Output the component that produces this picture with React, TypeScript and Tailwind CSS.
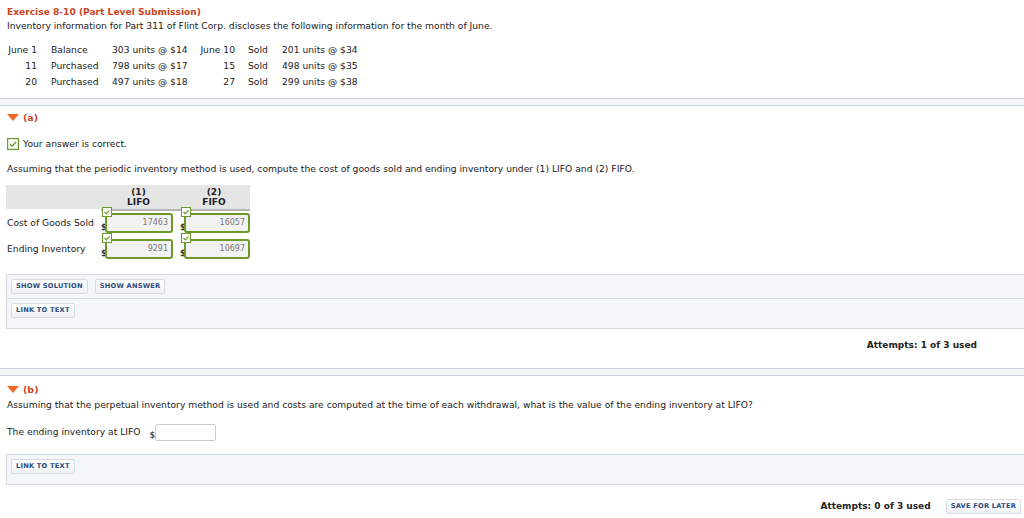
import React from "react";

const font = { fontFamily: '"DejaVu Sans", Verdana, sans-serif' };

function Tri() {
  return (
    <svg width="12" height="8" viewBox="0 0 12 8" className="mr-[4px]">
      <polygon points="0,0 12,0 6,7" fill="#f26522" />
    </svg>
  );
}

function SmallCheck({ size = 10 }: { size?: number }) {
  return (
    <svg width={size} height={size} viewBox="0 0 10 10">
      <rect x="0.5" y="0.5" width="9" height="9" fill="#fff" stroke="#6b9a2a" />
      <polyline points="2.5,5 4.3,6.8 7.5,3.3" fill="none" stroke="#6b9a2a" strokeWidth="1.2" />
    </svg>
  );
}

function Btn({ children }: { children: React.ReactNode }) {
  return (
    <div className="h-[15px] px-[4px] flex items-center rounded-[2px] border border-[#d6dce4] bg-gradient-to-b from-white to-[#eef1f5] text-[6.7px] font-bold text-[#2c4a7c] tracking-[0.2px] whitespace-nowrap">
      {children}
    </div>
  );
}

function Band() {
  return <div className="h-[8px] border-t border-b border-[#c9d1dc] bg-[#f3f7fa]" />;
}

function AnsInput({ value, w }: { value: string; w: number }) {
  return (
    <div className="relative flex items-end" style={{ width: w }}>
      <span className="w-[4px] text-[8px] font-bold text-[#333] leading-none mb-[1px]">$</span>
      <div className="flex-1 h-[20px] rounded-[3px] border-2 border-[#6b9a2a] bg-[#f2f2f2] flex items-center justify-end pr-[3px] text-[8px] text-[#777]">
        {value}
      </div>
      <div className="absolute left-[1px] -top-[6px]">
        <SmallCheck size={10} />
      </div>
    </div>
  );
}

export default function App() {
  return (
    <div style={font} className="w-[1024px] h-[518px] bg-white text-[#222] text-[9.2px] overflow-hidden">
      <div className="px-[7px] pt-[5px]">
        <div className="text-[#c8451e] font-bold text-[9.1px] leading-[12px] pt-[1px]">Exercise 8-10 (Part Level Submission)</div>
        <div className="mt-[2px] leading-[12px] whitespace-nowrap">
          Inventory information for Part 311 of Flint Corp. discloses the following information for the month of June.
        </div>
        <div className="mt-[12px] grid grid-cols-[44px_61px_78px_58px_34px_120px] gap-y-[4px] leading-[12px] whitespace-nowrap">
          <span className="text-right pr-[14px]">June 1</span><span>Balance</span><span>303 units @ $14</span><span className="text-right pr-[13px]">June 10</span><span>Sold</span><span>201 units @ $34</span>
          <span className="text-right pr-[14px]">11</span><span>Purchased</span><span>798 units @ $17</span><span className="text-right pr-[13px]">15</span><span>Sold</span><span>498 units @ $35</span>
          <span className="text-right pr-[14px]">20</span><span>Purchased</span><span>497 units @ $18</span><span className="text-right pr-[13px]">27</span><span>Sold</span><span>299 units @ $38</span>
        </div>
      </div>

      <div className="mt-[10px]"><Band /></div>

      <div className="px-[7px]">
        <div className="mt-[6px] flex items-center text-[#c8451e] font-bold text-[9.5px] leading-[12px]"><Tri />(a)</div>
        <div className="mt-[14px] flex items-center leading-[12px]">
          <SmallCheck size={12} />
          <span className="ml-[4px]">Your answer is correct.</span>
        </div>
        <div className="mt-[13px] leading-[12px] whitespace-nowrap">
          Assuming that the periodic inventory method is used, compute the cost of goods sold and ending inventory under (1) LIFO and (2) FIFO.
        </div>
        <div className="mt-[10px] -ml-[1px] w-[244px]">
          <div className="h-[24px] bg-[#e5e5e5] flex font-bold text-[9px] leading-[10px] text-[#222]">
            <div className="w-[99px]" />
            <div className="w-[67px] flex flex-col items-center justify-center">(1)<span>LIFO</span></div>
            <div className="w-[78px] flex flex-col items-center justify-center pl-[6px]">(2)<span>FIFO</span></div>
          </div>
          <div className="h-[2px] ml-[95px] bg-[#b5b5b5]" />
          <div className="mt-[2px] flex items-center h-[20px]">
            <div className="w-[95px] pl-[1px]">Cost of Goods Sold</div>
            <AnsInput value="17463" w={72} />
            <div className="w-[7px]" />
            <AnsInput value="16057" w={70} />
          </div>
          <div className="mt-[6px] flex items-center h-[20px]">
            <div className="w-[95px] pl-[1px]">Ending Inventory</div>
            <AnsInput value="9291" w={72} />
            <div className="w-[7px]" />
            <AnsInput value="10697" w={70} />
          </div>
        </div>
      </div>

      <div className="ml-[6px] mt-[15px] border border-r-0 border-[#d4dbe4] bg-[#f4f7fa]">
        <div className="h-[24px] flex items-center gap-[7px] px-[4px] border-b border-[#d4dbe4]">
          <Btn>SHOW SOLUTION</Btn>
          <Btn>SHOW ANSWER</Btn>
        </div>
        <div className="h-[29px] flex items-start pt-[4px] px-[4px]">
          <Btn>LINK TO TEXT</Btn>
        </div>
      </div>

      <div className="h-[39px] flex items-start justify-end pr-[47px] pt-[10px] leading-[12px] font-bold text-[9px]">Attempts: 1 of 3 used</div>

      <Band />

      <div className="px-[7px]">
        <div className="mt-[8px] flex items-center text-[#c8451e] font-bold text-[9.5px] leading-[12px]"><Tri />(b)</div>
        <div className="mt-[3px] leading-[12px] whitespace-nowrap">
          Assuming that the perpetual inventory method is used and costs are computed at the time of each withdrawal, what is the value of the ending inventory at LIFO?
        </div>
        <div className="mt-[12px] flex items-center h-[18px]">
          <span>The ending inventory at LIFO</span>
          <span className="ml-[9px] mt-[7px] text-[#555] text-[8px] font-bold">$</span>
          <div className="w-[61px] h-[17px] border border-[#ccc] rounded-[2px] bg-white" />
        </div>
      </div>

      <div className="ml-[6px] mt-[13px] h-[31px] border border-r-0 border-[#d4dbe4] bg-[#f4f7fa] flex items-start pt-[4px] px-[4px]">
        <Btn>LINK TO TEXT</Btn>
      </div>

      <div className="mt-[14px] flex items-center justify-end pr-[3px] gap-[15px]">
        <span className="font-bold text-[9px]">Attempts: 0 of 3 used</span>
        <Btn>SAVE FOR LATER</Btn>
      </div>
    </div>
  );
}
